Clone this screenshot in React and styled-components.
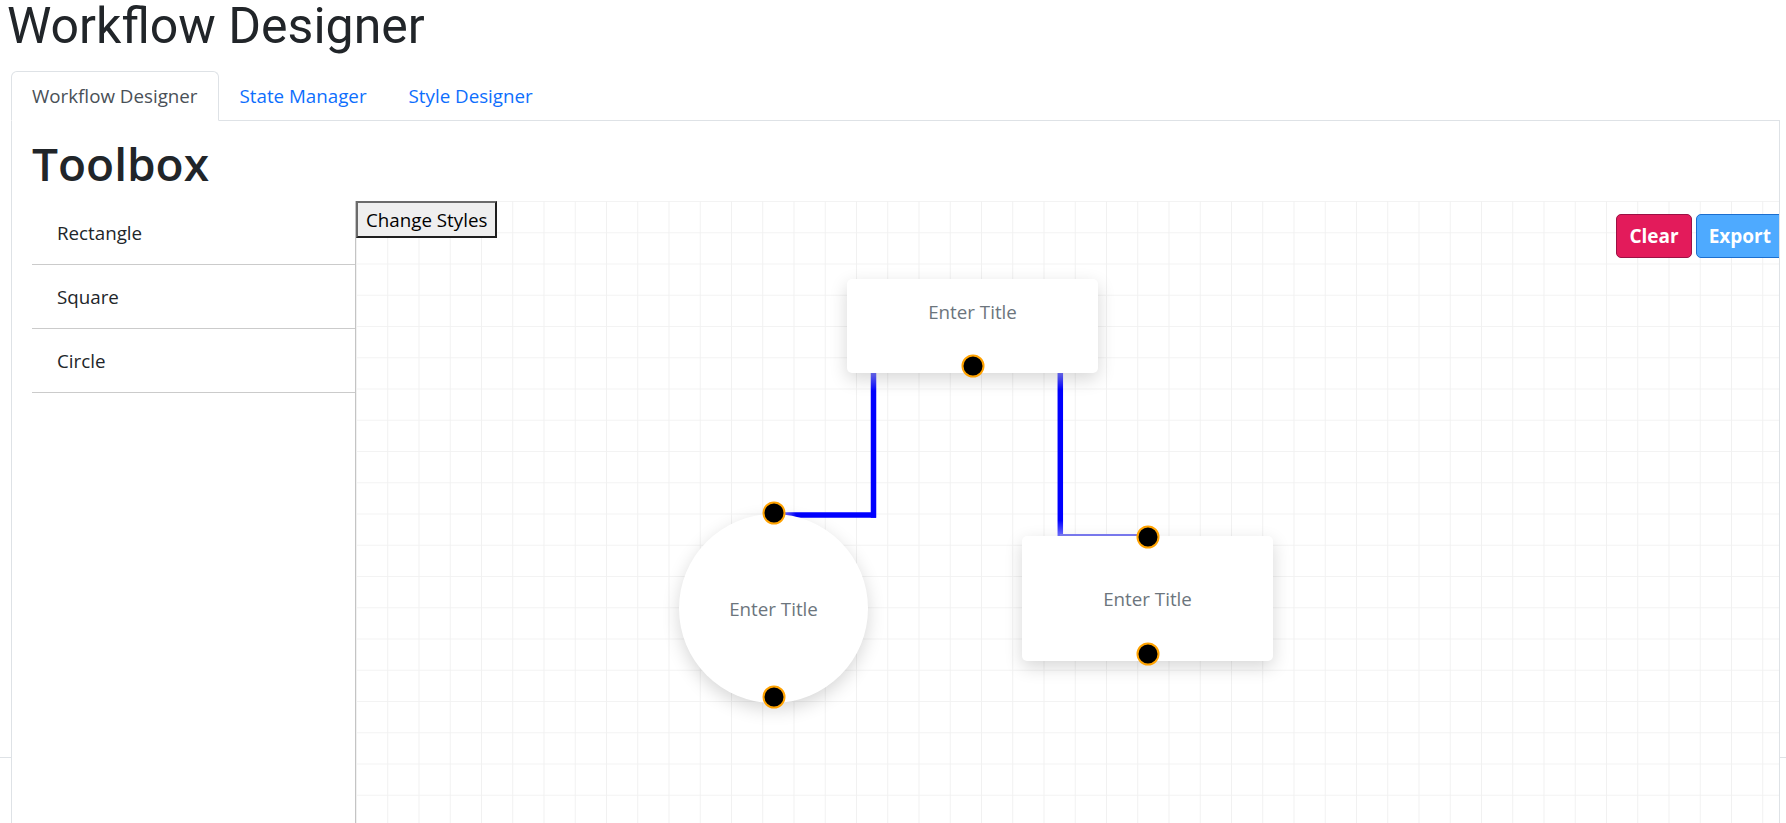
import React, { useState } from "react";
import styled, { createGlobalStyle, css } from "styled-components";

const GlobalStyle = createGlobalStyle`
  html, body {
    margin: 0;
    padding: 0;
    overflow: hidden;
    background: #fff linear-gradient(#dee2e6, #dee2e6) 0 757px / 100% 1px no-repeat;
  }
  body {
    font-family: "Open Sans", "Noto Sans", sans-serif;
    color: #212529;
  }
  * {
    box-sizing: border-box;
  }
`;

const Page = styled.div`
  padding: 0 6px 0 7px;
`;

const PageTitle = styled.h1`
  margin: 0 0 19px;
  font-family: Roboto, "Liberation Sans", sans-serif;
  font-weight: 400;
  font-size: 50px;
  line-height: 52px;
  color: #212529;
`;

const Tabs = styled.div`
  margin-left: 4px;
`;

const TabNav = styled.nav`
  display: flex;
  border-bottom: 1px solid #dee2e6;
`;

const Tab = styled.button`
  height: 50px;
  margin-bottom: -1px;
  padding: 0 20px;
  border: 1px solid transparent;
  border-radius: 6px 6px 0 0;
  background: none;
  font-family: "Open Sans", sans-serif;
  font-size: 18.75px;
  line-height: 48px;
  color: #0d6efd;
  cursor: pointer;

  ${(p) =>
    p.$active &&
    css`
      color: #495057;
      background: #fff;
      border-color: #dee2e6 #dee2e6 #fff;
    `}
`;

const Panel = styled.section`
  height: 720px;
  padding-left: 20px;
  border: 1px solid #dee2e6;
  border-top: none;
  background: #fff;
`;

const ToolboxTitle = styled.h1`
  margin: 0;
  padding-top: 4px;
  height: 80px;
  font-size: 46px;
  font-weight: 600;
  line-height: 76px;
  color: #212529;
`;

const Workspace = styled.div`
  display: flex;
  align-items: flex-start;
`;

const ToolList = styled.ul`
  flex: none;
  width: 323px;
  margin: 0;
  padding: 0;
  list-style: none;
`;

const ToolItem = styled.li`
  display: flex;
  align-items: center;
  height: 64px;
  padding-left: 25px;
  border-bottom: 1px solid #cbcbcb;
  font-size: 18.75px;
  color: #212529;
  cursor: grab;
`;

const Canvas = styled.div`
  position: relative;
  flex: 1;
  height: 640px;
  overflow: hidden;
  border-left: 1px solid #c4c4c4;
  background-color: #fff;
  background-image: linear-gradient(to right, #f1f1f1 1px, transparent 1px),
    linear-gradient(to bottom, #f3f3f3 1.25px, transparent 1.25px);
  background-size: 31.25px 31.25px;
`;

const ChangeStylesButton = styled.button`
  position: relative;
  z-index: 3;
  display: block;
  height: 37px;
  padding: 0 8px;
  border: 2px solid;
  border-color: #6b6b6b #1f1f1f #1f1f1f #6b6b6b;
  background: #efefef;
  font-family: "Open Sans", sans-serif;
  font-size: 18.75px;
  color: #000;
`;

const ActionBar = styled.div`
  position: absolute;
  z-index: 3;
  top: 13px;
  right: -5px;
  display: flex;
  gap: 4px;
`;

const ActionButton = styled.button`
  height: 44px;
  padding: 0 12px;
  border: 1px solid ${(p) => (p.$variant === "danger" ? "#9c1145" : "#1c6fcf")};
  border-radius: 5px;
  background: ${(p) => (p.$variant === "danger" ? "#e31b5b" : "#4eaaff")};
  font-family: "Open Sans", sans-serif;
  font-size: 19px;
  font-weight: 700;
  color: #fff;
`;

const Connectors = styled.svg`
  position: absolute;
  z-index: 1;
  left: 0;
  top: 0;
  width: 100%;
  height: 100%;
  pointer-events: none;
`;

const Node = styled.div`
  position: absolute;
  z-index: 2;
  left: ${(p) => p.$x}px;
  top: ${(p) => p.$y}px;
  width: ${(p) => p.$w}px;
  height: ${(p) => p.$h}px;
  display: flex;
  justify-content: center;
  align-items: ${(p) => (p.$centered ? "center" : "flex-start")};
  padding-top: ${(p) => (p.$centered ? 0 : 19)}px;
  background: #fff;
  border-radius: ${(p) => (p.$shape === "circle" ? "50%" : "5px")};
  box-shadow: 0 6px 18px rgba(0, 0, 0, 0.16);
`;

const NodeTitle = styled.span`
  font-size: 18.75px;
  line-height: 28px;
  color: #6c757d;
`;

const Port = styled.span`
  position: absolute;
  left: 50%;
  width: 23px;
  height: 23px;
  border-radius: 50%;
  background: #000;
  border: 2.5px solid #ffa200;
  ${(p) =>
    p.$edge === "top"
      ? css`
          top: ${p.$offset}px;
          transform: translate(-50%, -50%);
        `
      : css`
          bottom: ${p.$offset}px;
          transform: translate(-50%, 50%);
        `}
`;

const tools = ["Rectangle", "Square", "Circle"];

const nodes = [
  { id: 1, shape: "rect", x: 491, y: 78, w: 251, h: 94, ports: [{ edge: "bottom", offset: 7 }] },
  {
    id: 2,
    shape: "circle",
    x: 323,
    y: 313,
    w: 189,
    h: 189,
    centered: true,
    ports: [
      { edge: "top", offset: -1 },
      { edge: "bottom", offset: 6 },
    ],
  },
  {
    id: 3,
    shape: "rect",
    x: 666,
    y: 335,
    w: 251,
    h: 125,
    centered: true,
    ports: [
      { edge: "top", offset: 1 },
      { edge: "bottom", offset: 7 },
    ],
  },
];

const App = () => {
  const [activeTab, setActiveTab] = useState(0);
  const tabs = ["Workflow Designer", "State Manager", "Style Designer"];

  return (
    <>
      <GlobalStyle />
      <Page>
        <PageTitle>Workflow Designer</PageTitle>
        <Tabs>
          <TabNav>
            {tabs.map((t, i) => (
              <Tab key={t} $active={i === activeTab} onClick={() => setActiveTab(i)}>
                {t}
              </Tab>
            ))}
          </TabNav>
          <Panel>
            <ToolboxTitle>Toolbox</ToolboxTitle>
            <Workspace>
              <ToolList>
                {tools.map((t) => (
                  <ToolItem key={t}>{t}</ToolItem>
                ))}
              </ToolList>
              <Canvas>
                <ChangeStylesButton>Change Styles</ChangeStylesButton>
                <ActionBar>
                  <ActionButton $variant="danger">Clear</ActionButton>
                  <ActionButton $variant="primary">Export</ActionButton>
                </ActionBar>

                <Connectors>
                  <defs>
                    <linearGradient id="fadeTopA" gradientUnits="userSpaceOnUse" x1="0" y1="172" x2="0" y2="190">
                      <stop offset="0" stopColor="#6f6fff" />
                      <stop offset="1" stopColor="#0000ff" />
                    </linearGradient>
                    <linearGradient id="fadeLeft" gradientUnits="userSpaceOnUse" x1="418" y1="0" x2="440" y2="0">
                      <stop offset="0" stopColor="#c8c8ff" />
                      <stop offset="1" stopColor="#0000ff" />
                    </linearGradient>
                    <linearGradient id="fadeBoth" gradientUnits="userSpaceOnUse" x1="0" y1="172" x2="0" y2="336">
                      <stop offset="0" stopColor="#6f6fff" />
                      <stop offset="0.1" stopColor="#0000ff" />
                      <stop offset="0.9" stopColor="#0000ff" />
                      <stop offset="1" stopColor="#7a7aff" />
                    </linearGradient>
                  </defs>
                  <line x1="517.5" y1="172" x2="517.5" y2="316.75" stroke="url(#fadeTopA)" strokeWidth="5.5" />
                  <line x1="520" y1="314" x2="418" y2="314" stroke="url(#fadeLeft)" strokeWidth="5.5" />
                  <line x1="704.3" y1="172" x2="704.3" y2="335" stroke="url(#fadeBoth)" strokeWidth="5.5" />
                  <line x1="704" y1="334" x2="784" y2="334" stroke="#7c7cf4" strokeWidth="2" />
                </Connectors>

                {nodes.map((n) => (
                  <Node key={n.id} $shape={n.shape} $x={n.x} $y={n.y} $w={n.w} $h={n.h} $centered={n.centered}>
                    <NodeTitle>Enter Title</NodeTitle>
                    {n.ports.map((p) => (
                      <Port key={p.edge} $edge={p.edge} $offset={p.offset} />
                    ))}
                  </Node>
                ))}
              </Canvas>
            </Workspace>
          </Panel>
        </Tabs>
      </Page>
    </>
  );
};

export default App;
